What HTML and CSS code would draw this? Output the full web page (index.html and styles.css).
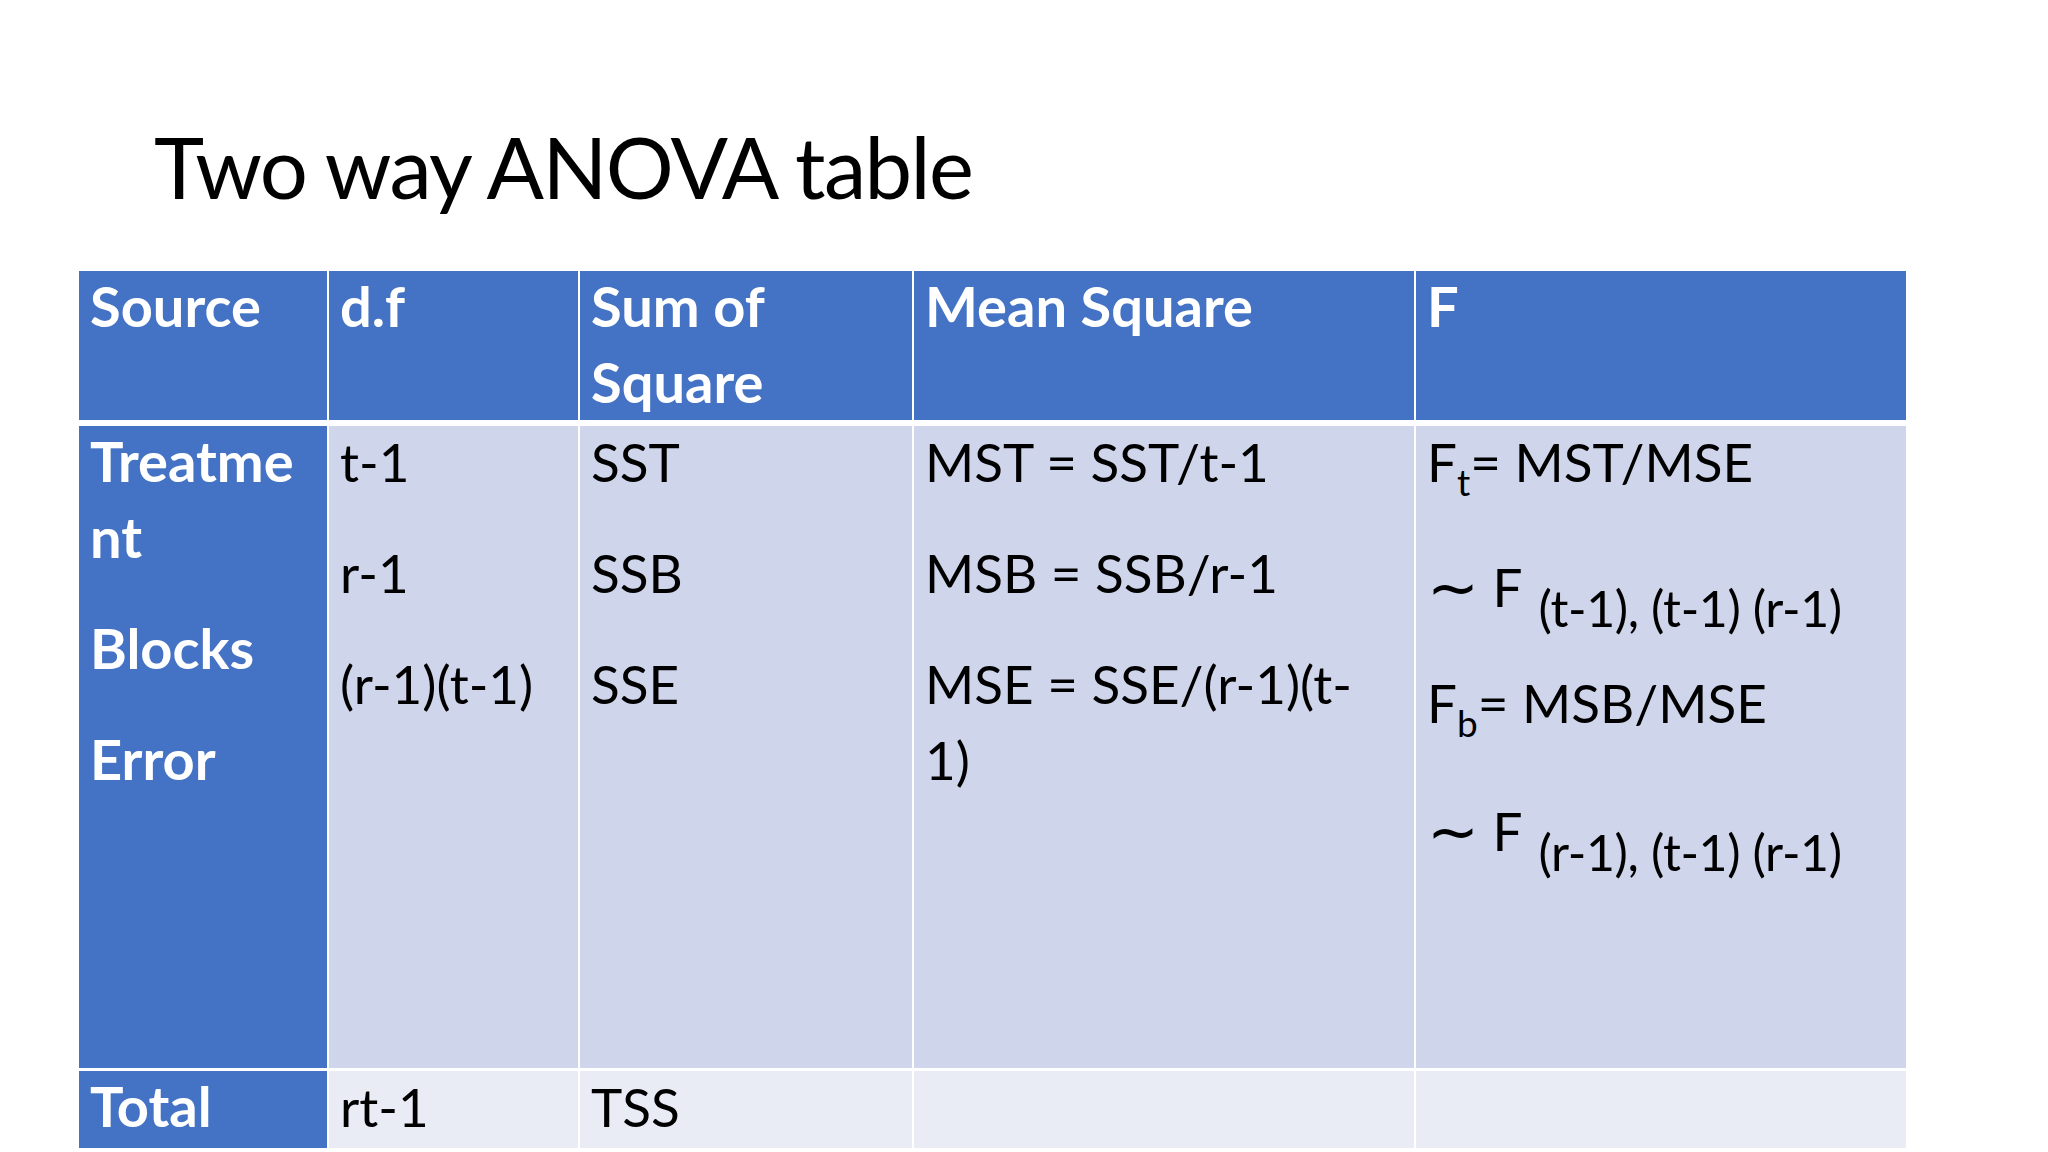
FILE: index.html
```html
<!DOCTYPE html>
<html lang="en">
<head>
<meta charset="utf-8">
<title>Two way ANOVA table</title>
<link rel="stylesheet" href="styles.css">
</head>
<body>
<div class="slide">
  <h1 class="title">Two way ANOVA table</h1>
  <div class="anova">
    <div class="row head">
      <div class="cell"><p>Source</p></div>
      <div class="cell"><p>d.f</p></div>
      <div class="cell"><p>Sum of Square</p></div>
      <div class="cell"><p>Mean Square</p></div>
      <div class="cell"><p>F</p></div>
    </div>
    <div class="row body">
      <div class="cell stub">
        <p>Treatme<wbr>nt</p>
        <p>Blocks</p>
        <p>Error</p>
      </div>
      <div class="cell">
        <p>t-1</p>
        <p>r-1</p>
        <p>(r-1)(t-1)</p>
      </div>
      <div class="cell">
        <p>SST</p>
        <p>SSB</p>
        <p>SSE</p>
      </div>
      <div class="cell">
        <p>MST = SST/t-1</p>
        <p>MSB = SSB/r-1</p>
        <p>MSE = SSE/(r-1)(t-<br>1)</p>
      </div>
      <div class="cell fcol">
        <p>F<sub class="sm">t</sub>= MST/MSE</p>
        <p class="dist"><span class="tilde">∼</span> F<sub class="df">(t-1), (t-1) (r-1)</sub></p>
        <p>F<sub class="sm">b</sub>= MSB/MSE</p>
        <p class="dist"><span class="tilde">∼</span> F<sub class="df">(r-1), (t-1) (r-1)</sub></p>
      </div>
    </div>
    <div class="row total">
      <div class="cell stub"><p>Total</p></div>
      <div class="cell"><p>rt-1</p></div>
      <div class="cell"><p>TSS</p></div>
      <div class="cell"></div>
      <div class="cell"></div>
    </div>
  </div>
</div>
</body>
</html>
```

FILE: styles.css
```css
html, body {
  margin: 0;
  padding: 0;
  background: #ffffff;
}

.slide {
  width: 2048px;
  height: 1152px;
  overflow: hidden;
  background: #ffffff;
  font-family: Lato, "Open Sans", "Liberation Sans", sans-serif;
  color: #000000;
}

.title {
  margin: 0;
  padding: 124px 0 0 154px;
  font-size: 85px;
  line-height: 85px;
  font-weight: 400;
  letter-spacing: -1.6px;
  color: #000000;
}

.anova {
  margin: 62px 0 0 79px;
  width: 1827px;
  display: flex;
  flex-direction: column;
}

.row {
  display: grid;
  grid-template-columns: 248px 249px 332px 500px 490px;
  column-gap: 2px;
}

.head {
  height: 149px;
}

.body {
  height: 642px;
  margin-top: 6px;
}

.total {
  height: 77px;
  margin-top: 3px;
}

.cell {
  padding: 0 10px 0 11px;
  font-size: 53px;
  line-height: 76px;
  overflow: hidden;
}

.cell p {
  margin: 35px 0 0 0;
}

.cell p:first-child {
  margin-top: -2px;
}

.head .cell {
  background: #4472c4;
  color: #ffffff;
  font-weight: 700;
  font-size: 56px;
}

.body .cell {
  background: #cfd5ea;
}

.total .cell {
  background: #e9ebf5;
}

.row .stub {
  background: #4472c4;
  color: #ffffff;
  font-weight: 700;
  font-size: 56px;
}

.head .cell p:first-child,
.row .stub p:first-child {
  margin-top: -3px;
}

.fcol p:nth-child(2) {
  margin-top: 49px;
}

.fcol p:nth-child(3) {
  margin-top: 40px;
}

.fcol p:nth-child(4) {
  margin-top: 52px;
}

.sm {
  font-size: 37px;
  line-height: 0;
  vertical-align: -14px;
}

.df {
  font-size: 50px;
  letter-spacing: -0.4px;
  line-height: 0;
  vertical-align: -20px;
  margin-left: 16px;
}

.tilde {
  font-family: "DejaVu Sans", sans-serif;
  font-size: 62px;
  line-height: 0;
  vertical-align: -2px;
}
```
